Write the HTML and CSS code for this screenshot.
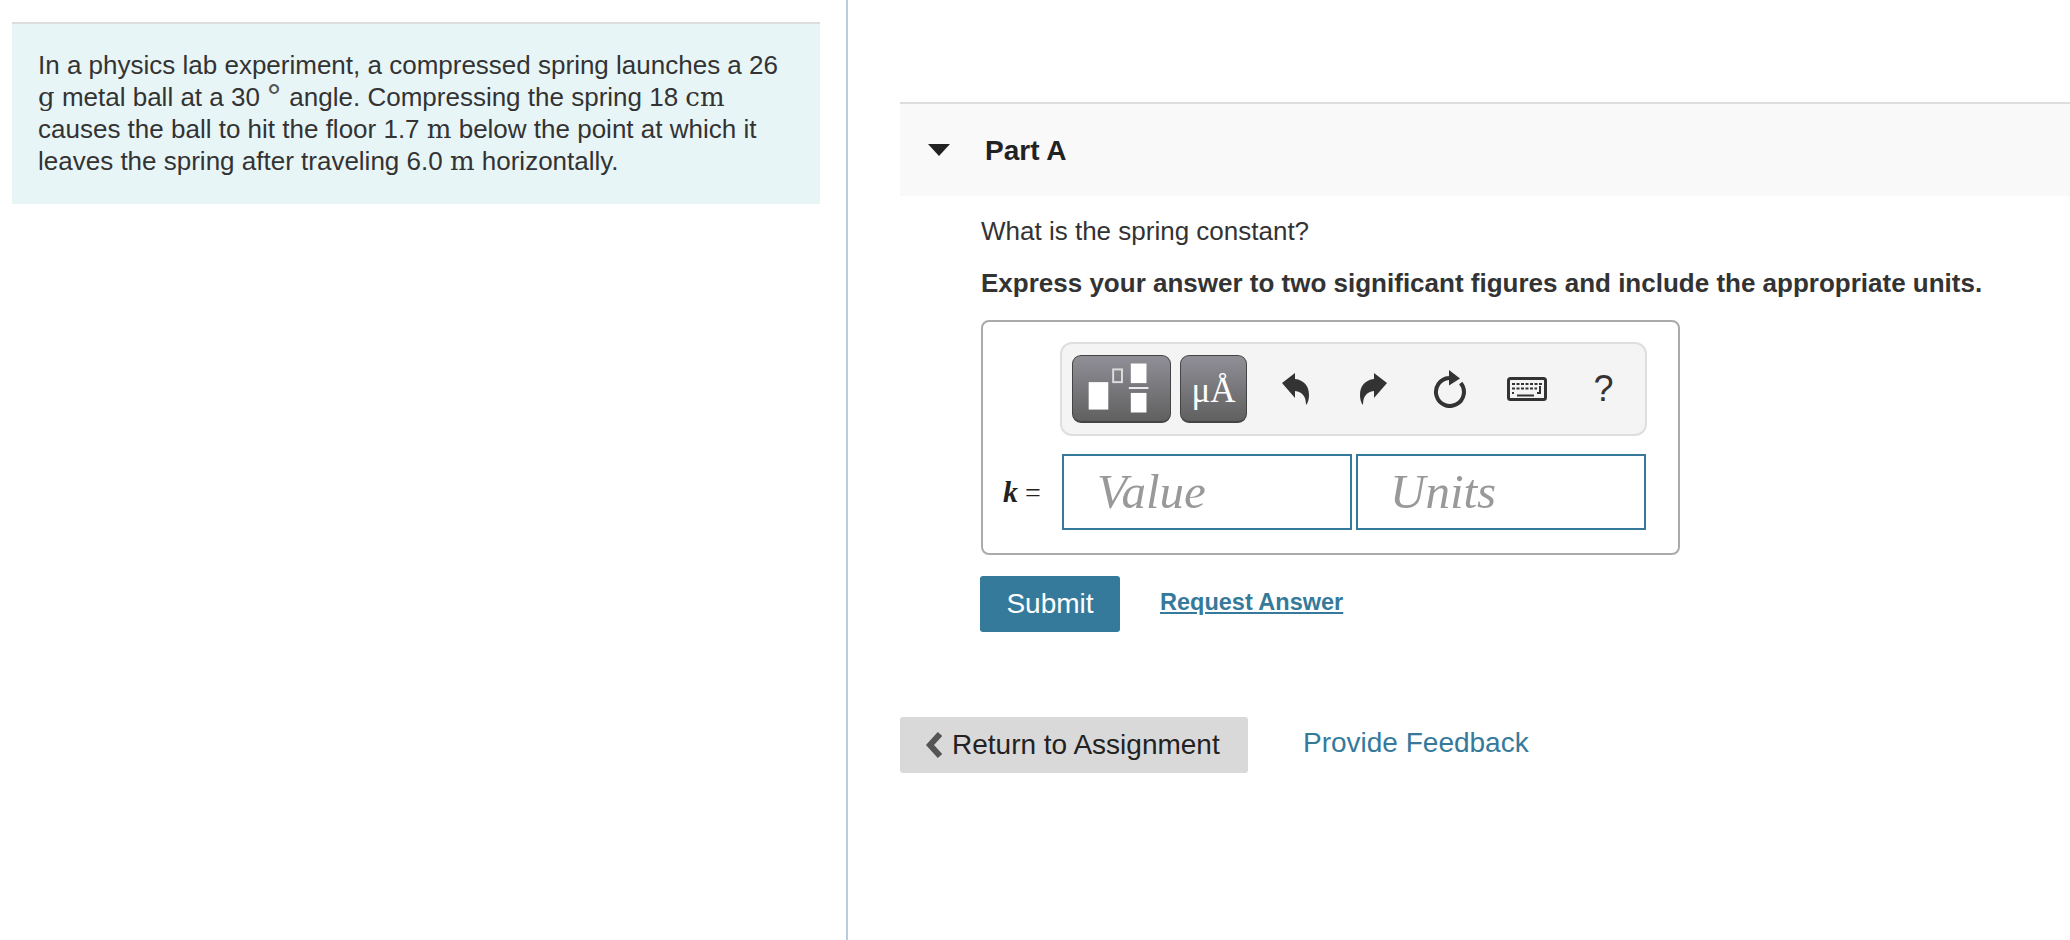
FILE: index.html
```html
<!DOCTYPE html>
<html lang="en">
<head>
  <meta charset="UTF-8">
  <title>Part A</title>
  <link rel="stylesheet" href="styles.css">
</head>
<body>

  <div class="page">
    <div class="left-col">
      <div class="intro">
        <p>In a physics lab experiment, a compressed spring launches a 26 <span class="math">g</span> metal ball at a 30 <span class="deg">∘</span> angle. Compressing the spring 18 <span class="math">cm</span> causes the ball to hit the floor 1.7 <span class="math">m</span> below the point at which it leaves the spring after traveling 6.0 <span class="math">m</span> horizontally.</p>
      </div>
    </div>

    <div class="right-col">
      <div class="part-head">
        <svg class="caret" width="22" height="14" viewBox="0 0 22 14"><path d="M0 1h22L11 13z" fill="#222"/></svg>
        <span>Part A</span>
      </div>

      <div class="part-body">
        <p class="question">What is the spring constant?</p>
        <p class="instruction">Express your answer to two significant figures and include the appropriate units.</p>

        <div class="answer-box">
          <div class="toolbar">
            <div class="tool-btn tool-template">
              <svg width="99" height="67" viewBox="0 0 99 67">
                <rect x="16" y="27" width="20" height="28" fill="#fff"/>
                <rect x="41" y="14" width="9" height="13" fill="none" stroke="#ddd" stroke-width="2"/>
                <rect x="59" y="8" width="16" height="20" fill="#fff"/>
                <rect x="57" y="32" width="20" height="2" fill="#eee"/>
                <rect x="59" y="38" width="16" height="20" fill="#fff"/>
              </svg>
            </div>
            <div class="tool-btn tool-symbol">μÅ</div>
            <div class="tool-icons">
              <svg class="tool-icon" width="30" height="34" viewBox="0 0 30 34"><path d="M1 11 14 1v6c9 1 14 7 14 16 0 4-1 8-3 10 0-8-3-13-11-14v7z" fill="#333"/></svg>
              <svg class="tool-icon" width="30" height="34" viewBox="0 0 30 34"><path d="M29 11 16 1v6C7 8 2 14 2 23c0 4 1 8 3 10 0-8 3-13 11-14v7z" fill="#333"/></svg>
              <svg class="tool-icon" width="34" height="38" viewBox="0 0 34 38"><path d="M27.700 13A14 14 0 1 1 16 8" fill="none" stroke="#333" stroke-width="4"/><path d="M16 0l11 8.500-11 7z" fill="#333"/></svg>
              <svg class="tool-icon" width="40" height="24" viewBox="0 0 40 24">
                <rect x="1.500" y="1.500" width="37" height="21" rx="2" fill="none" stroke="#333" stroke-width="3"/>
                <path d="M5 7h30M5 11.500h25M5 16h2M30 16h2" fill="none" stroke="#333" stroke-width="2" stroke-dasharray="3 1.500"/>
                <path d="M33 9v7h-3M10 18.500h17" fill="none" stroke="#333" stroke-width="2"/>
              </svg>
              <span class="tool-help">?</span>
            </div>
          </div>

          <div class="answer-row">
            <span class="var-label"><i>k</i> =</span>
            <div class="field">Value</div>
            <div class="field">Units</div>
          </div>
        </div>

        <div class="actions">
          <button class="submit" type="button">Submit</button>
          <a class="request" href="#">Request Answer</a>
        </div>
      </div>

      <div class="footer-links">
        <a class="return" href="#">
          <svg width="18" height="26" viewBox="0 0 18 26"><path d="M16 2 6 13l10 11" fill="none" stroke="#555" stroke-width="6"/></svg>
          Return to Assignment
        </a>
        <a class="feedback" href="#">Provide Feedback</a>
      </div>
    </div>
  </div>

</body>
</html>
```

FILE: styles.css
```css
html, body {
  height: 100%;
}

body {
  font-family: "Liberation Sans", Arial, sans-serif;
  background-color: #ffffff;
  color: #333;
  margin: 0;
  overflow: hidden;
}

p {
  margin: 0;
}

a {
  color: #367a9b;
}

.page {
  display: grid;
  grid-template-columns: 848px 1fr;
  height: 100%;
}

.left-col {
  border-right: 2px solid #bccbdd;
  padding: 22px 26px 0 12px;
}

.intro {
  background-color: #e8f5f7;
  border-top: 2px solid #dddddd;
  padding: 25px 34px 27px 26px;
  font-size: 26px;
  line-height: 32px;
}

.math {
  font-family: "DejaVu Serif", "Liberation Serif", serif;
  font-size: 26px;
  line-height: 1;
}

.deg {
  font-size: 32px;
  line-height: 0;
  vertical-align: 8px;
  margin: 0 -2px 0 -3px;
  color: #555;
}

.right-col {
  padding: 102px 0 0 52px;
}

.part-head {
  background-color: #f9f9f9;
  border-top: 2px solid #dddddd;
  height: 92px;
  display: flex;
  align-items: center;
  padding-left: 28px;
  font-size: 28px;
  font-weight: bold;
  color: #222;
}

.part-head span {
  padding-top: 2px;
}

.caret {
  margin-right: 35px;
}

.part-body {
  padding: 0 0 0 81px;
}

.question {
  font-size: 26px;
  line-height: 34px;
  margin-top: 18px;
}

.instruction {
  font-size: 26px;
  font-weight: bold;
  line-height: 34px;
  margin-top: 18px;
}

.answer-box {
  width: 699px;
  height: 235px;
  margin-top: 20px;
  border: 2px solid #aaaaaa;
  border-radius: 8px;
  padding: 20px 24px 0 77px;
  box-sizing: border-box;
}

.toolbar {
  display: flex;
  align-items: center;
  height: 94px;
  width: 587px;
  box-sizing: border-box;
  background-color: #f4f4f4;
  border: 2px solid #dedede;
  border-radius: 12px;
  padding: 0 0 0 10px;
}

.tool-btn {
  height: 68px;
  box-sizing: border-box;
  border: 1px solid #444;
  border-bottom-width: 2px;
  border-radius: 9px;
  background: linear-gradient(#908f97, #606060);
  display: flex;
  align-items: center;
  justify-content: center;
  color: #fff;
}

.tool-template {
  width: 99px;
  margin-right: 9px;
}

.tool-symbol {
  width: 67px;
  font-family: "Liberation Serif", serif;
  font-size: 35px;
  padding-top: 5px;
}

.tool-icons {
  flex: 1;
  display: grid;
  grid-template-columns: repeat(5, 77px);
  justify-items: center;
  align-items: center;
  padding-left: 10px;
}

.tool-help {
  font-size: 36px;
  color: #333;
}

.answer-row {
  display: flex;
  align-items: center;
  margin-top: 18px;
  margin-left: -58px;
}

.var-label {
  width: 60px;
  padding-left: 1px;
  box-sizing: border-box;
  font-family: "Liberation Serif", serif;
  font-size: 28px;
  color: #222;
}

.var-label i {
  font-size: 30px;
  font-weight: bold;
}

.field {
  width: 290px;
  height: 76px;
  box-sizing: border-box;
  border: 2px solid #367a9b;
  margin-right: 4px;
  padding-left: 33px;
  font-family: "Liberation Serif", serif;
  font-style: italic;
  font-size: 49px;
  line-height: 72px;
  color: #999999;
}

.field + .field {
  padding-left: 32px;
}

.actions {
  display: flex;
  align-items: flex-start;
  margin-top: 21px;
  margin-left: -1px;
}

.submit {
  width: 140px;
  height: 56px;
  background-color: #367a9b;
  color: white;
  border: none;
  border-radius: 3px;
  font-family: "Liberation Sans", Arial, sans-serif;
  font-size: 28px;
  cursor: pointer;
}

.request {
  margin-left: 40px;
  margin-top: 13px;
  font-size: 23.500px;
  font-weight: bold;
}

.footer-links {
  display: flex;
  align-items: center;
  margin-top: 85px;
}

.return {
  width: 348px;
  height: 56px;
  box-sizing: border-box;
  background-color: #d9d9d9;
  border-radius: 3px;
  display: flex;
  align-items: center;
  gap: 10px;
  padding-left: 24px;
  color: #222;
  font-size: 28px;
  text-decoration: none;
}

.feedback {
  margin-left: 55px;
  margin-bottom: 4px;
  font-size: 28px;
  text-decoration: none;
}
```
